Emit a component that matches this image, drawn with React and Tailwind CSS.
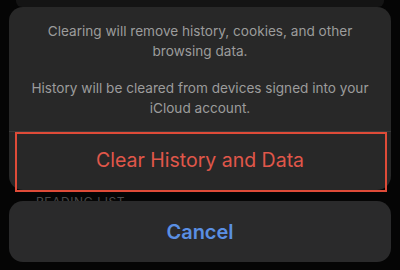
export default function App() {
  return (
    <div
      className="w-[400px] h-[270px] overflow-hidden bg-[#050505] flex flex-col"
      style={{ fontFamily: "Inter, 'Liberation Sans', Arial, sans-serif" }}
    >
      {/* sheet peeking behind */}
      <div className="mx-[16px] h-[7px] shrink-0 rounded-b-[6px] bg-[#141414]" />

      <div className="relative mx-[9px] shrink-0 rounded-[14px] bg-[#282828]">
        <div className="px-4 pt-[15px] pb-[13px] text-center text-[13.6px] leading-[19.5px] text-[#9c9c9c]">
          <p>Clearing will remove history, cookies, and other browsing data.</p>
          <p className="mt-[18px]">History will be cleared from devices signed into your iCloud account.</p>
        </div>
        <div className="h-px bg-[#3a3a3a]" />
        <div className="flex h-[58px] items-center justify-center text-[19.5px] text-[#e0574a]">
          Clear History and Data
        </div>
        {/* highlight outline */}
        <div className="absolute left-[6px] right-[4px] top-[125px] h-[60px] border-2 border-[#df4b38]" />
      </div>

      <div className="h-[11px] shrink-0 overflow-hidden pl-[36px] pt-[6px] text-[12px] leading-[12px] tracking-wider text-[#4a4a4a]">
        READING LIST
      </div>

      <div className="mx-[9px] flex h-[61px] shrink-0 items-center justify-center rounded-[14px] bg-[#2a2a2b] text-[20px] font-semibold text-[#5a8fe3]">
        Cancel
      </div>
    </div>
  );
}
